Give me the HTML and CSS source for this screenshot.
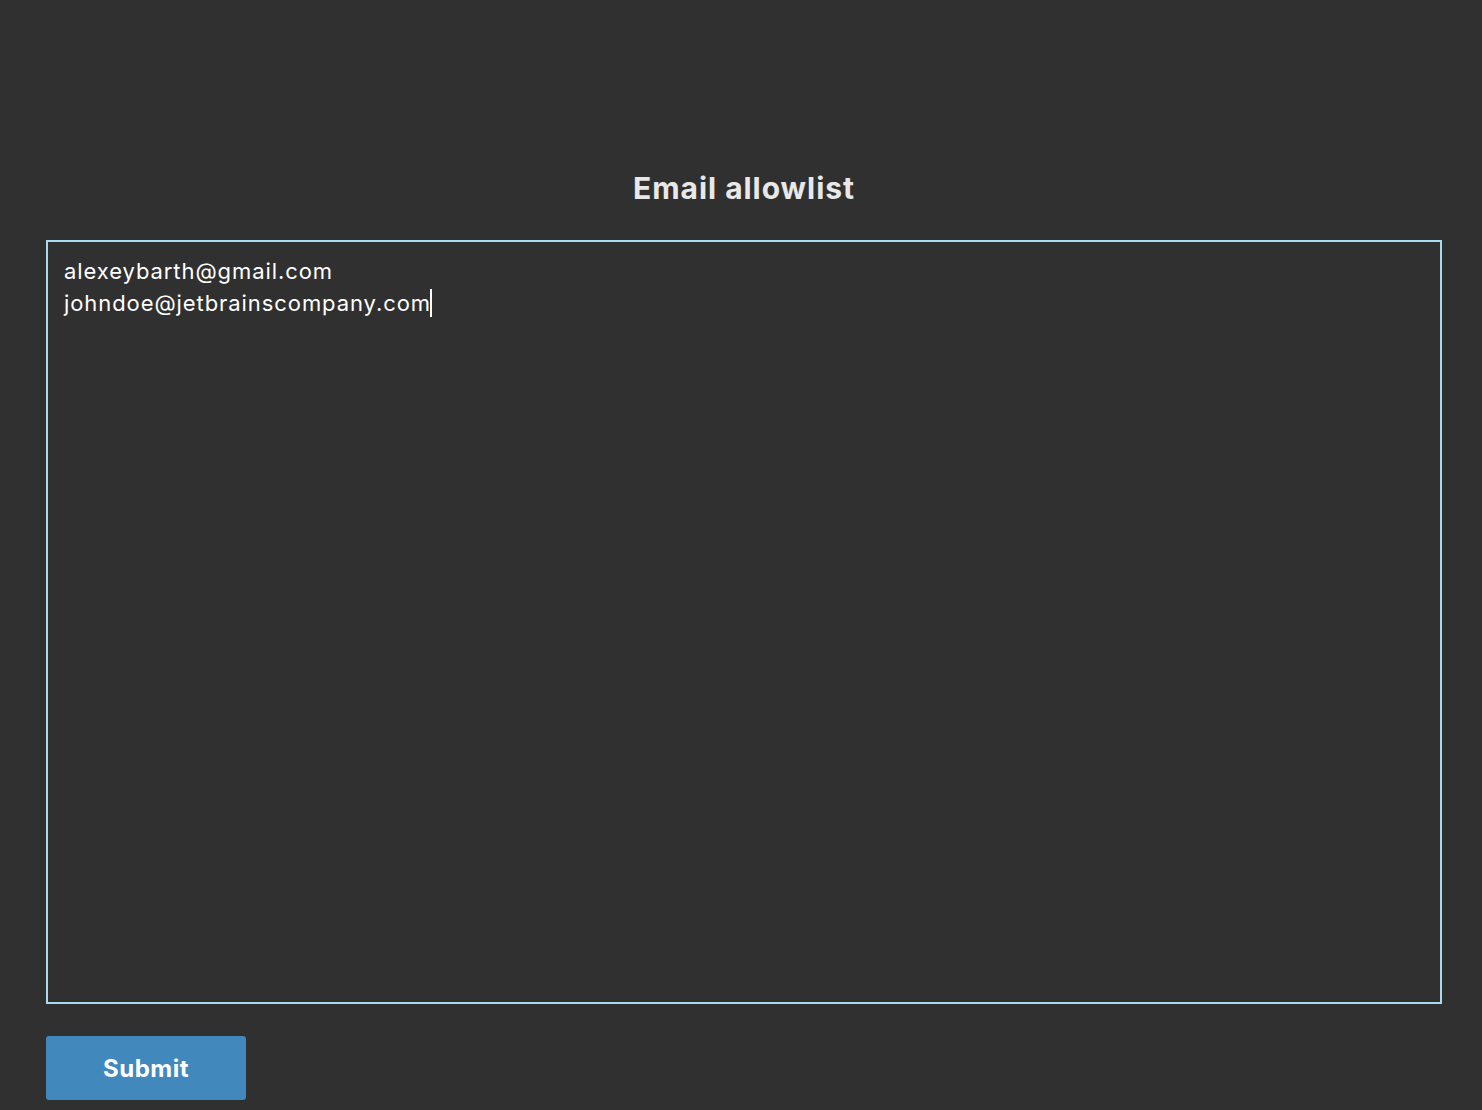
FILE: index.html
```html
<!DOCTYPE html>
<html>
<head>
<meta charset="utf-8">
<title>Email allowlist</title>
<link rel="stylesheet" href="styles.css">
</head>
<body>

<div class="page">
  <h1 class="title">Email allowlist</h1>
  <div class="allowlist">
    <div class="line">alexeybarth@gmail.com</div>
    <div class="line">johndoe@jetbrainscompany.com<span class="caret"></span></div>
  </div>
  <button class="submit" type="button">Submit</button>
</div>

</body>
</html>
```

FILE: styles.css
```css
html, body {
  margin: 0;
  height: 100%;
  background: #303030;
  overflow: hidden;
}
body {
  font-family: Inter, "Noto Sans", sans-serif;
  color: #fff;
}
.page {
  margin: 0 40px 0 46px;
  padding-top: 168px;
}
.title {
  margin: 0 0 32px;
  text-align: center;
  font-size: 30px;
  line-height: 40px;
  font-weight: 700;
  color: #e8e8e8;
  letter-spacing: 0.95px;
}
.allowlist {
  height: 733px;
  border: 2px solid #a9dcef;
  padding: 13px 16px 14px;
  font-size: 22px;
  line-height: 32px;
  letter-spacing: 0.92px;
}
.caret {
  display: inline-block;
  width: 2px;
  height: 28px;
  margin-left: -1px;
  background: #fff;
  vertical-align: -6px;
}
.submit {
  margin-top: 32px;
  width: 200px;
  height: 64px;
  border: none;
  border-radius: 3px;
  background: #4189bd;
  color: #fff;
  font-family: Inter, "Noto Sans", sans-serif;
  font-size: 24px;
  font-weight: 700;
  letter-spacing: 0.5px;
  cursor: pointer;
}
```
